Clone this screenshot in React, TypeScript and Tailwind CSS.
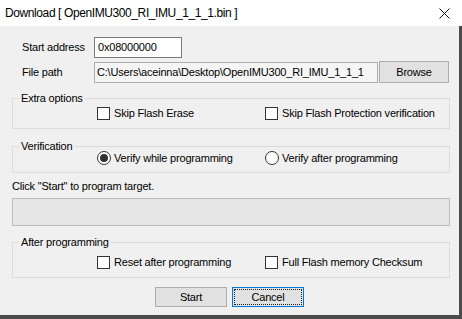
import React from 'react';

const FONT = { fontFamily: '"Liberation Sans", Arial, sans-serif' };

function Check({ label, checked = false }: { label: string; checked?: boolean }) {
  return (
    <span className="flex items-center gap-[4px]">
      <span className="flex h-[13px] w-[13px] items-center justify-center border border-[#333] bg-white">
        {checked && <span className="h-[7px] w-[7px] bg-[#333]" />}
      </span>
      <span>{label}</span>
    </span>
  );
}

function Radio({ label, checked = false }: { label: string; checked?: boolean }) {
  return (
    <span className="flex items-center gap-[3px]">
      <span className="flex h-[14px] w-[14px] items-center justify-center rounded-full border border-[#333] bg-white">
        {checked && <span className="h-[8px] w-[8px] rounded-full bg-[#333]" />}
      </span>
      <span>{label}</span>
    </span>
  );
}

function Group({ title, className, children }: { title: string; className: string; children: React.ReactNode }) {
  return (
    <fieldset className={`mx-[12px] w-[438px] border border-[#dcdcdc] ${className}`}>
      <legend className="ml-[6px] px-[2px] leading-[13px]">{title}</legend>
      {children}
    </fieldset>
  );
}

export default function App() {
  return (
    <div className="flex h-[319px] w-[462px] flex-col bg-[#4b4b4b] text-[11px] tracking-[-0.2px] text-black" style={FONT}>
      <div className="flex h-[26px] w-[462px] shrink-0 items-center justify-between bg-white pl-[5px] pr-[12px]">
        <span className="text-[12px] tracking-[-0.4px]">Download [ OpenIMU300_RI_IMU_1_1_1.bin ]</span>
        <svg width="11" height="11" viewBox="0 0 11 11" className="mt-[1px]">
          <path d="M0.5 0.5L10.5 10.5M10.5 0.5L0.5 10.5" stroke="#111" strokeWidth="1" />
        </svg>
      </div>

      <div className="flex h-[289px] w-[459px] flex-col bg-[#f0f0f0]">
        <div className="mt-[11px] flex h-[21px] items-center">
          <span className="w-[94px] whitespace-nowrap pl-[22px]">Start address</span>
          <div className="flex h-[21px] w-[88px] items-center border border-[#7a7a7a] bg-white pl-[3px]">0x08000000</div>
        </div>

        <div className="mt-[3px] flex h-[22px] items-center">
          <span className="w-[94px] pl-[22px]">File path</span>
          <div className="flex h-[21px] w-[284px] items-center overflow-hidden whitespace-nowrap border border-[#adadad] bg-[#f5f5f5] pl-[2px]">
            C:\Users\aceinna\Desktop\OpenIMU300_RI_IMU_1_1_1
          </div>
          <button className="ml-[1px] h-[22px] w-[70px] border border-[#adadad] bg-[#e1e1e1]">Browse</button>
        </div>

        <Group title="Extra options" className="mt-[9px] h-[37px]">
          <div className="mt-[1px] flex h-[14px] items-center">
            <span className="ml-[84px] w-[168px]">
              <Check label="Skip Flash Erase" />
            </span>
            <Check label="Skip Flash Protection verification" />
          </div>
        </Group>

        <Group title="Verification" className="mt-[11px] h-[33px]">
          <div className="-mt-[2px] flex h-[14px] items-center">
            <span className="ml-[84px] w-[168px]">
              <Radio label="Verify while programming" checked />
            </span>
            <Radio label="Verify after programming" />
          </div>
        </Group>

        <div className="mt-[6px] h-[14px] pl-[12px] leading-[14px]">Click "Start" to program target.</div>

        <div className="mx-[12px] mt-[5px] h-[28px] w-[438px] shrink-0 border border-[#bcbcbc] bg-[#e6e6e6]" />

        <Group title="After programming" className="mt-[10px] h-[42px]">
          <div className="mt-[6px] flex h-[14px] items-center">
            <span className="ml-[84px] w-[168px]">
              <Check label="Reset after programming" />
            </span>
            <Check label="Full Flash memory Checksum" />
          </div>
        </Group>

        <div className="mt-[9px] flex gap-[5px] pl-[155px]">
          <button className="h-[20px] w-[72px] border border-[#adadad] bg-[#e1e1e1]">Start</button>
          <button className="flex h-[20px] w-[72px] items-center justify-center border border-[#0078d7] bg-[#e1e1e1] p-[1px]">
            <span className="flex h-full w-full items-center justify-center border border-dotted border-[#222]">Cancel</span>
          </button>
        </div>
      </div>
    </div>
  );
}
